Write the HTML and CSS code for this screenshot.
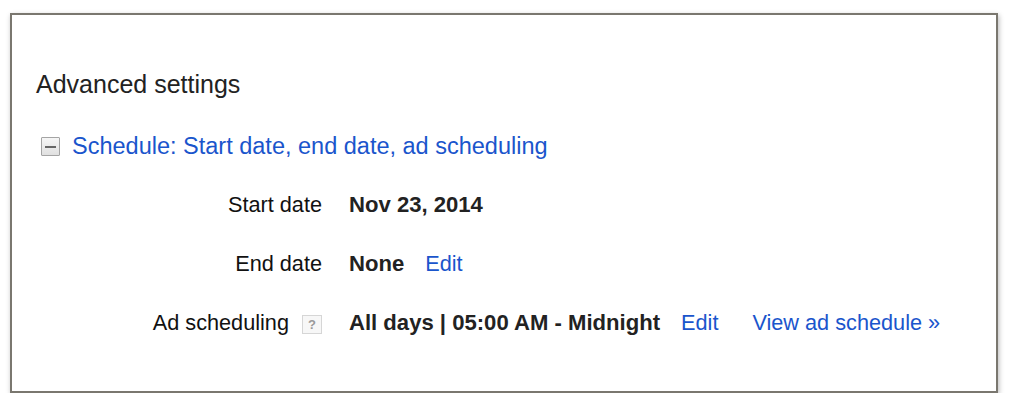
FILE: index.html
```html
<!DOCTYPE html>
<html>
<head>
<meta charset="utf-8">
<link rel="stylesheet" href="styles.css">
</head>
<body>
<div class="panel">
  <h2 class="title">Advanced settings</h2>
  <div class="section-head">
    <span class="toggle"><span class="minus"></span></span>
    <a class="link head-link" href="#">Schedule: Start date, end date, ad scheduling</a>
  </div>
  <div class="rows">
    <div class="label">Start date</div>
    <div class="value"><b>Nov 23, 2014</b></div>
    <div class="label">End date</div>
    <div class="value"><b>None</b><a class="link edit" href="#">Edit</a></div>
    <div class="label">Ad scheduling<span class="help">?</span></div>
    <div class="value"><b>All days | 05:00 AM - Midnight</b><a class="link edit" href="#">Edit</a><a class="link view" href="#">View ad schedule »</a></div>
  </div>
</div>
</body>
</html>
```
FILE: styles.css
```css
html, body {
  margin: 0;
  padding: 0;
  background: #ffffff;
}
body {
  font-family: "Liberation Sans", Arial, sans-serif;
  color: #222222;
}
.panel {
  box-sizing: border-box;
  margin: 13px 0 0 10px;
  width: 988px;
  height: 380px;
  border: 2px solid #7a776f;
  background: #fff;
  box-shadow: 1px 2px 5px rgba(0, 0, 0, 0.28);
  padding: 55px 24px 0 24px;
}
.title {
  margin: 0;
  font-size: 25px;
  font-weight: normal;
  line-height: 28px;
  color: #222;
}
.section-head {
  display: flex;
  align-items: center;
  margin-top: 34px;
  height: 28px;
  margin-left: 5px;
}
.toggle {
  box-sizing: border-box;
  width: 19px;
  height: 19px;
  border: 1px solid #a4a4a4;
  border-radius: 1px;
  background: linear-gradient(#f6f6f6, #e0e0e0);
  display: flex;
  align-items: center;
  justify-content: center;
  margin-right: 12px;
  margin-top: 1px;
}
.minus {
  width: 11px;
  height: 2px;
  background: #666;
}
.link {
  color: #1a55cc;
  text-decoration: none;
}
.head-link {
  font-size: 23.5px;
  line-height: 28px;
}
.rows {
  display: grid;
  grid-template-columns: 286px auto;
  column-gap: 27px;
  row-gap: 33px;
  margin-top: 32px;
  font-size: 21.7px;
  line-height: 26px;
}
.label {
  text-align: right;
  display: flex;
  justify-content: flex-end;
  align-items: center;
  color: #111;
}
.value {
  display: flex;
  align-items: center;
}
.value b {
  font-weight: bold;
  font-size: 22.1px;
  color: #222;
}
.edit {
  margin-left: 21px;
}
.view {
  margin-left: 34px;
}
.help {
  box-sizing: border-box;
  width: 20px;
  height: 19px;
  margin-left: 13px;
  border: 1px solid #d6d6d6;
  background: #f7f7f7;
  color: #9a9a9a;
  font-size: 13px;
  font-weight: bold;
  line-height: 17px;
  text-align: center;
  margin-top: 2px;
}
```
